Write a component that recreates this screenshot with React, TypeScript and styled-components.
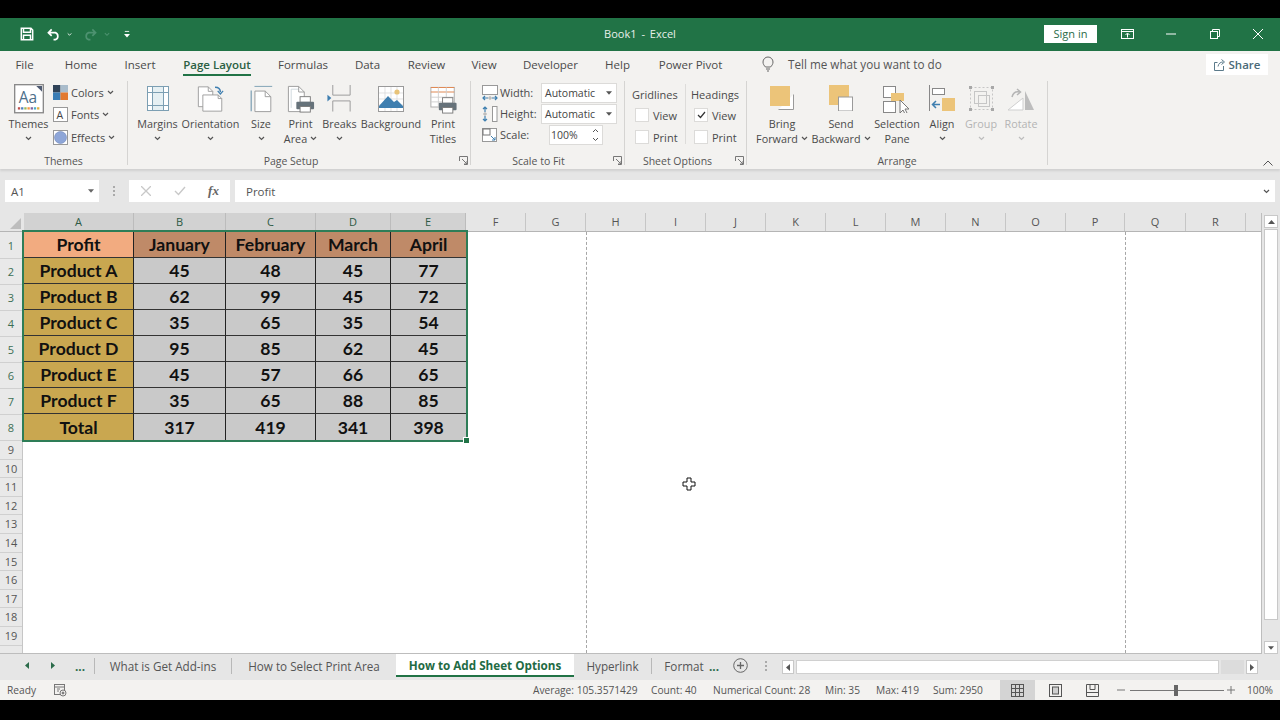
import React from 'react';
import styled, { createGlobalStyle } from 'styled-components';

const Global = createGlobalStyle`
    html, body { margin: 0; padding: 0; background: #000; }
    body { font-family: "Open Sans", "Noto Sans", sans-serif; font-size: 11px; color: #444; }
    svg { display: block; }
`;

const GREEN = '#217346';

const Screen = styled.div`
    width: 1280px;
    height: 720px;
    display: flex;
    flex-direction: column;
    overflow: hidden;
    background: #000;
    position: relative;
`;
const BlackBar = styled.div`
    height: ${p => p.$h}px;
    flex: none;
    background: #000;
`;

/* title bar */
const TitleBar = styled.div`
    height: 33px;
    flex: none;
    background: ${GREEN};
    display: grid;
    grid-template-columns: 1fr auto 1fr;
    align-items: center;
    padding-bottom: 1px;
    box-sizing: border-box;
`;
const QuickAccess = styled.div`
    display: flex;
    align-items: center;
    padding-left: 19px;
`;
const QuickSlot = styled.div<{ $w: number; $ml?: number }>`
    width: ${p => p.$w}px;
    margin-left: ${p => p.$ml ?? 0}px;
    display: flex;
    justify-content: center;
`;
const TitleText = styled.div`
    color: #e8f0eb;
    font-size: 11px;
    word-spacing: 2px;
    margin-bottom: 2px;
`;
const WindowControls = styled.div`
    display: flex;
    justify-content: flex-end;
    align-items: center;
`;
const SignIn = styled.div`
    width: 53px;
    height: 18px;
    background: #fff;
    color: #2a6b48;
    font-size: 11px;
    line-height: 18px;
    text-align: center;
    margin-right: 9px;
`;
const WinBtn = styled.div`
    width: 43.5px;
    display: flex;
    justify-content: center;
`;

/* ribbon tabs */
const TabsRow = styled.div`
    height: 29px;
    flex: none;
    background: #f3f2f0;
    display: flex;
    align-items: flex-start;
    position: relative;
`;
const RibbonTab = styled.div<{ $w: number; $active?: boolean }>`
    width: ${p => p.$w}px;
    text-align: center;
    font-size: 11.5px;
    font-weight: ${p => (p.$active ? 600 : 400)};
    line-height: 16px;
    padding-top: 6px;
    color: ${p => (p.$active ? '#2b5f43' : '#4a4a4a')};
    span {
        display: inline-block;
        padding-bottom: 1px;
        border-bottom: ${p => (p.$active ? `2px solid ${GREEN}` : 'none')};
    }
`;
const TellMe = styled.div`
    display: flex;
    align-items: center;
    gap: 14px;
    margin-left: 26px;
    padding-top: 5px;
    font-size: 11.7px;
    color: #555;
`;
const ShareBtn = styled.div`
    position: absolute;
    right: 12px;
    top: 3px;
    width: 62px;
    height: 21px;
    background: #fff;
    display: flex;
    align-items: center;
    justify-content: center;
    gap: 3px;
    font-size: 11.5px;
    font-weight: 600;
    color: #4a6a78;
`;

/* ribbon body */
const Ribbon = styled.div`
    height: 89px;
    flex: none;
    background: #f3f2f0;
    display: flex;
    position: relative;
    box-shadow: 0 2px 2px #d0d0d0;
    z-index: 1;
`;
const Group = styled.div<{ $w: number }>`
    width: ${p => p.$w}px;
    flex: none;
    height: 84px;
    margin-top: 1px;
    display: flex;
    flex-direction: column;
    position: relative;
    border-right: 1px solid #d5d4d2;
    box-sizing: border-box;
`;
const GroupBody = styled.div<{ $pl: number }>`
    height: 67px;
    flex: none;
    padding-left: ${p => p.$pl}px;
    padding-top: 3px;
    box-sizing: border-box;
    display: flex;
    align-items: flex-start;
`;
const GroupLabel = styled.div<{ $pr?: number }>`
    height: 16px;
    flex: none;
    line-height: 16px;
    text-align: center;
    font-size: 10.5px;
    color: #555;
    margin-top: 5px;
    padding-right: ${p => p.$pr ?? 0}px;
`;
const Launcher = styled.div`
    position: absolute;
    right: 2px;
    bottom: 0;
`;
const BigBtn = styled.div<{ $w: number; $dim?: boolean }>`
    width: ${p => p.$w}px;
    flex: none;
    display: flex;
    flex-direction: column;
    align-items: center;
    color: ${p => (p.$dim ? '#b4b4b4' : '#4a4a4a')};
    font-size: 10.8px;
    line-height: 15px;
    white-space: nowrap;
`;
const IconSlot = styled.div`
    height: 32px;
    padding-top: 1px;
    box-sizing: border-box;
    display: flex;
    align-items: flex-start;
    justify-content: center;
`;
const LabelLine = styled.div`
    height: 15px;
    display: flex;
    align-items: center;
    justify-content: center;
    gap: 3px;
`;
const SmallList = styled.div`
    display: flex;
    flex-direction: column;
    gap: 6.5px;
    margin-left: 6px;
`;
const SmallItem = styled.div`
    height: 16px;
    display: flex;
    align-items: center;
    gap: 3px;
    font-size: 11px;
    color: #4a4a4a;
    white-space: nowrap;
`;
const ScaleGrid = styled.div`
    display: grid;
    grid-template-columns: 18px 41px 76px;
    grid-auto-rows: 21px;
    align-items: center;
    margin-top: -2px;
    font-size: 11px;
    color: #4a4a4a;
`;
const SelectBox = styled.div`
    width: 76px;
    height: 20px;
    box-sizing: border-box;
    background: #fff;
    border: 1px solid #dcdbd9;
    display: flex;
    align-items: center;
    justify-content: space-between;
    padding: 0 4px 0 3px;
    font-size: 10.5px;
    color: #444;
`;
const SpinBox = styled(SelectBox)`
    width: 54px;
    margin-left: 8px;
    padding: 0 3px 0 1px;
`;
const SheetOptCol = styled.div<{ $w: number; $pl: number; $line?: boolean }>`
    width: ${p => p.$w}px;
    flex: none;
    box-sizing: border-box;
    padding-left: ${p => p.$pl}px;
    border-right: ${p => (p.$line ? '1px solid #dddcda' : 'none')};
    height: 60px;
    font-size: 11px;
    color: #4a4a4a;
    display: flex;
    flex-direction: column;
`;
const OptHead = styled.div`
    height: 15px;
    flex: none;
    line-height: 15px;
    margin: 3px 0 2px 0;
    white-space: nowrap;
`;
const OptRow = styled.div`
    height: 22px;
    flex: none;
    display: flex;
    align-items: center;
    gap: 4px;
    padding-left: 3px;
`;
const CheckBox = styled.div`
    width: 12px;
    height: 12px;
    background: #fff;
    border: 1px solid #dcdbd9;
    display: flex;
    align-items: center;
    justify-content: center;
`;
const Collapse = styled.div`
    position: absolute;
    right: 7px;
    bottom: 3px;
`;

/* formula bar */
const FormulaBar = styled.div`
    height: 44px;
    flex: none;
    background: #e6e6e6;
    display: flex;
    align-items: flex-start;
    padding: 11px 5px 0 5px;
    box-sizing: border-box;
    font-size: 11.5px;
    color: #555;
`;
const NameBox = styled.div`
    width: 94px;
    height: 22px;
    background: #fff;
    display: flex;
    align-items: center;
    justify-content: space-between;
    padding: 0 5px 0 6px;
    box-sizing: border-box;
`;
const BarDots = styled.div`
    width: 30px;
    display: flex;
    justify-content: center;
    padding-top: 6px;
`;
const FxBox = styled.div`
    width: 101px;
    height: 22px;
    background: #fff;
    display: grid;
    grid-template-columns: 34px 34px 33px;
    align-items: center;
    justify-items: center;
    margin-right: 5px;
`;
const FxText = styled.span`
    font-family: "Liberation Serif", serif;
    font-style: italic;
    font-size: 13px;
    font-weight: 700;
    color: #666;
`;
const FormulaInput = styled.div`
    flex: 1;
    height: 22px;
    background: #fff;
    display: flex;
    align-items: center;
    justify-content: space-between;
    padding: 0 5px 0 11px;
`;

/* sheet */
const SheetArea = styled.div`
    height: 441px;
    flex: none;
    display: flex;
    background: #fff;
    position: relative;
`;
const SheetMain = styled.div`
    width: 1262px;
    display: flex;
    flex-direction: column;
    border-right: 1px solid #bdbdbd;
    box-sizing: border-box;
    overflow: hidden;
    border-bottom: 1px solid #bdbdbd;
`;
const ColHeaderRow = styled.div`
    height: 19px;
    flex: none;
    display: flex;
    background: #e6e6e6;
    border-bottom: 1px solid #b5b5b5;
    box-sizing: border-box;
`;
const Corner = styled.div`
    width: 24px;
    flex: none;
    display: flex;
    align-items: flex-end;
    justify-content: flex-end;
    padding: 0 3px 2px 0;
    box-sizing: border-box;
`;
const ColHead = styled.div<{ $w: number; $sel?: boolean }>`
    width: ${p => p.$w}px;
    flex: none;
    box-sizing: border-box;
    text-align: center;
    font-size: 11px;
    line-height: 17px;
    color: ${p => (p.$sel ? '#2f5a44' : '#555')};
    background: ${p => (p.$sel ? '#d2d2d2' : '#e6e6e6')};
    border-right: 1px solid ${p => (p.$sel ? '#bcbcbc' : '#c6c6c6')};
`;
const SheetBody = styled.div`
    flex: 1;
    display: flex;
    position: relative;
    min-height: 0;
`;
const RowHeaders = styled.div`
    width: 23px;
    flex: none;
    background: #e9e9e9;
    border-right: 1px solid #c6c6c6;
    box-sizing: border-box;
    padding-top: 1px;
`;
const RowHead = styled.div<{ $h: number; $sel?: boolean }>`
    height: ${p => p.$h}px;
    box-sizing: border-box;
    border-bottom: 1px solid #d0d0d0;
    text-align: center;
    font-size: 11px;
    line-height: ${p => p.$h}px;
    color: ${p => (p.$sel ? '#3c6f54' : '#555')};
`;
const Canvas = styled.div`
    flex: 1;
    padding-left: 1px;
`;
const Table = styled.div`
    width: 442px;
    position: relative;
    display: grid;
    grid-template-columns: 110px 92px 90px 75px 75px;
    grid-auto-rows: 26px;
    outline: 2px solid #2e7d57;
    font-family: Lato, "Open Sans", sans-serif;
    font-weight: 700;
    font-size: 17.6px;
    color: #111;
`;
const Cell = styled.div<{ $bg: string; $last?: boolean; $bottom?: boolean }>`
    background: ${p => p.$bg};
    display: flex;
    align-items: center;
    justify-content: center;
    box-sizing: border-box;
    border-right: ${p => (p.$last ? 'none' : '1.5px solid #222')};
    border-bottom: ${p => (p.$bottom ? 'none' : '1.5px solid #333')};
`;
const FillHandle = styled.div`
    position: absolute;
    right: -4px;
    bottom: -4px;
    width: 5px;
    height: 5px;
    background: ${GREEN};
    border: 1px solid #fff;
`;
const PageBreak = styled.div<{ $x: number }>`
    position: absolute;
    left: ${p => p.$x}px;
    top: 0;
    bottom: 0;
    width: 0;
    border-left: 1px dashed #a6a6a6;
`;
const Pointer = styled.div`
    position: absolute;
    left: 682px;
    top: 245px;
`;
const VScroll = styled.div`
    width: 18px;
    flex: none;
    background: #e6e6e6;
    display: flex;
    flex-direction: column;
    align-items: center;
    padding-top: 2px;
    box-sizing: border-box;
`;
const ScrollArrow = styled.div`
    width: 14px;
    height: 13px;
    flex: none;
    background: #fff;
    border: 1px solid #c8c8c8;
    box-sizing: border-box;
    display: flex;
    align-items: center;
    justify-content: center;
`;
const VThumb = styled.div`
    width: 14px;
    height: 392px;
    margin: 1px 0 21px;
    background: #fff;
    border: 1px solid #c8c8c8;
    box-sizing: border-box;
`;

/* sheet tabs */
const SheetTabs = styled.div`
    height: 26px;
    flex: none;
    background: #e6e6e6;
    display: flex;
    align-items: flex-start;
    padding-left: 14px;
    box-sizing: border-box;
    font-size: 11.7px;
    color: #555;
`;
const TabNav = styled.div<{ $w: number }>`
    width: ${p => p.$w}px;
    height: 23px;
    flex: none;
    display: flex;
    align-items: center;
    justify-content: center;
    color: #2b6b4a;
    font-weight: 700;
`;
const SheetTab = styled.div<{ $w: number; $pl?: number; $active?: boolean; $line?: boolean; $lineLeft?: boolean }>`
    width: ${p => p.$w}px;
    height: ${p => (p.$active ? 23 : 16)}px;
    margin-top: ${p => (p.$active ? 0 : 4)}px;
    padding-left: ${p => p.$pl ?? 0}px;
    flex: none;
    box-sizing: border-box;
    display: flex;
    align-items: center;
    justify-content: center;
    white-space: nowrap;
    background: ${p => (p.$active ? '#fff' : 'transparent')};
    color: ${p => (p.$active ? '#1f6b44' : '#555')};
    font-weight: ${p => (p.$active ? 700 : 400)};
    border-bottom: ${p => (p.$active ? `2px solid ${GREEN}` : 'none')};
    border-right: ${p => (p.$line ? '1px solid #b8b8b8' : 'none')};
    border-left: ${p => (p.$lineLeft ? '1px solid #b8b8b8' : 'none')};
`;
const HScroll = styled.div`
    width: 476px;
    height: 14px;
    margin-top: 6px;
    margin-left: 11px;
    flex: none;
    display: flex;
    align-items: stretch;
    gap: 2px;
`;
const HArrow = styled.div`
    width: 12px;
    background: #fff;
    border: 1px solid #c8c8c8;
    box-sizing: border-box;
    display: flex;
    align-items: center;
    justify-content: center;
`;
const HThumb = styled.div`
    width: 423px;
    background: #fff;
    border: 1px solid #d0d0d0;
    box-sizing: border-box;
`;
const HTrack = styled.div`
    flex: 1;
    background: #dcdcdc;
`;

/* status bar */
const StatusBar = styled.div`
    height: 20px;
    flex: none;
    background: #f3f2f0;
    display: flex;
    align-items: center;
    font-size: 10.2px;
    color: #555;
    padding-left: 7px;
`;
const StatusReady = styled.div`
    width: 47px;
`;
const StatusRight = styled.div`
    margin-left: auto;
    display: flex;
    align-items: center;
    height: 100%;
`;
const StatusStat = styled.div<{ $w: number }>`
    width: ${p => p.$w}px;
    white-space: nowrap;
`;
const ViewBtn = styled.div<{ $w: number; $on?: boolean }>`
    width: ${p => p.$w}px;
    height: 100%;
    display: flex;
    align-items: center;
    justify-content: center;
    background: ${p => (p.$on ? '#d4d4d4' : 'transparent')};
`;
const ZoomMinus = styled.div`
    margin-left: 8px;
`;
const ZoomSlider = styled.div`
    width: 94px;
    height: 1px;
    background: #777;
    margin: 0 3px 0 5px;
    position: relative;
`;
const ZoomThumb = styled.div`
    position: absolute;
    left: 44px;
    top: -5px;
    width: 4px;
    height: 11px;
    background: #666;
`;
const ZoomPct = styled.div`
    width: 33px;
    margin-left: 12px;
`;

/* icons */
const Chevron = ({ c = '#555' }: { c?: string }) => (
    <svg width="7" height="5" viewBox="0 0 7 5"><path d="M1 1l2.5 2.5L6 1" fill="none" stroke={c} strokeWidth="1.2" /></svg>
);
const Caret = ({ c = '#666' }: { c?: string }) => (
    <svg width="6" height="4" viewBox="0 0 7 4"><path d="M0 0h7L3.5 4z" fill={c} /></svg>
);
const Dialog = () => (
    <svg width="9" height="9" viewBox="0 0 9 9"><path d="M.5 5V.5H8.5V8.5H5M3 3l5 5M8 5v3H5" fill="none" stroke="#777" /></svg>
);
const SaveIcon = () => (
    <svg width="14" height="14" viewBox="0 0 16 16" fill="none" stroke="#fff" strokeWidth="1.7"><path d="M1.5 1.5h11l2 2v11h-13zM4 2v4h8V2M4 14.5V9.500h8v5" /></svg>
);
const UndoIcon = ({ c }: { c: string }) => (
    <svg width="14" height="13" viewBox="0 0 15 13" fill="none" stroke={c} strokeWidth="1.8"><path d="M5 1L1.500 4.500 5 8M2 4.500h7a4 4 0 0 1 0 7.500H7" /></svg>
);
const RedoIcon = ({ c }: { c: string }) => (
    <svg width="14" height="13" viewBox="0 0 15 13" fill="none" stroke={c} strokeWidth="1.8"><path d="M10 1l3.500 3.500L10 8M13 4.500H6a4 4 0 0 0 0 7.500h2" /></svg>
);
const CustomizeIcon = () => (
    <svg width="6" height="8" viewBox="0 0 7 8"><path d="M1 1h5" stroke="#fff" /><path d="M0 4h7L3.500 8z" fill="#fff" /></svg>
);
const ThemesIcon = () => (
    <svg width="30" height="30" viewBox="0 0 31 31" style={{ marginTop: -1 }}>
        <rect x=".7" y=".7" width="29.600" height="29" fill="#fff" stroke="#8a8a8a" strokeWidth="1.400" />
        <path d="M23 2h6v6z" fill="#4f5b72" />
        <text x="5" y="20" fontSize="16" fontFamily="Open Sans" fill="#4d6f8a">Aa</text>
        {['#c0504d', '#4f81bd', '#9bbb59', '#f79646', '#8064a2', '#4bacc6', '#e0b040'].map((c, i) => (
            <rect key={c} x={4 + i * 3.3} y="24" width="2.400" height="2.400" fill={c} />
        ))}
    </svg>
);
const ColorsIcon = () => (
    <svg width="15" height="15" viewBox="0 0 15 15">
        <rect width="7.500" height="7.500" fill="#2f4358" /><rect x="7.500" width="7.500" height="7.500" fill="#a9bccb" />
        <rect y="7.500" width="7.500" height="7.500" fill="#3a7db5" /><rect x="7.500" y="7.500" width="7.500" height="7.500" fill="#e2792f" />
    </svg>
);
const FontsIcon = () => (
    <svg width="15" height="15" viewBox="0 0 15 15">
        <rect x=".5" y=".5" width="14" height="14" fill="#fff" stroke="#999" />
        <text x="3.500" y="12" fontSize="10.500" fontFamily="Open Sans" fill="#444">A</text>
    </svg>
);
const EffectsIcon = () => (
    <svg width="15" height="15" viewBox="0 0 15 15">
        <rect x=".5" y=".5" width="14" height="14" fill="#fff" stroke="#999" />
        <circle cx="7.500" cy="7.500" r="6" fill="#8ea6d8" stroke="#6f86b8" strokeWidth=".6" />
    </svg>
);
const MarginsIcon = () => (
    <svg width="24" height="27" viewBox="0 0 24 27" fill="none" stroke="#7c9fb3">
        <rect x="1.500" y="1.500" width="21" height="24" fill="#fff" />
        <rect x="6.500" y="1.500" width="11" height="24" fill="#e6f0f3" />
        <path d="M1.500 7.500h21M1.500 20.500h21" />
    </svg>
);
const OrientationIcon = () => (
    <svg width="27" height="28" viewBox="0 0 30 30" fill="none" stroke="#9a9a9a">
        <path d="M1.500 1.500h11l5 5v17h-16z" fill="#fff" />
        <path d="M12.500 1.500v5h5" />
        <path d="M6.500 10.500h17l4 4v14h-21z" fill="#fff" />
        <path d="M23.500 10.500v4h4" />
        <path d="M20 2c4 0 6 1.500 6 5.500" stroke="#3f7fb0" strokeWidth="1.600" />
        <path d="M23 6l3 3.500 3-3.500" stroke="#3f7fb0" strokeWidth="1.400" />
    </svg>
);
const SizeIcon = () => (
    <svg width="24" height="28" viewBox="0 0 24 30" fill="none">
        <path d="M5 1.500h19" stroke="#7c9fb3" /><path d="M1.500 6v22" stroke="#7c9fb3" strokeWidth="1.300" />
        <path d="M5.500 6.500h11l6 6v16h-17z" fill="#fff" stroke="#9a9a9a" /><path d="M16.500 6.500v6h6" stroke="#9a9a9a" />
    </svg>
);
const Printer = ({ x, y }: { x: number; y: number }) => (
    <g transform={`translate(${x} ${y})`}>
        <rect x="4" y="0.500" width="11" height="6" fill="#fff" stroke="#7a7a7a" />
        <rect x="0" y="6" width="19" height="8" rx="1" fill="#66727a" />
        <rect x="4" y="11" width="11" height="6" fill="#fff" stroke="#7a7a7a" />
    </g>
);
const PrintAreaIcon = () => (
    <svg width="30" height="28" viewBox="0 0 30 30" fill="none">
        <path d="M1.500 1.500h11l6 6v21h-17z" fill="#fff" stroke="#9a9a9a" />
        <path d="M4.500 4.500h8M4.500 4.500v20" stroke="#cfd8dd" />
        <path d="M12.500 1.500v6h6" stroke="#9a9a9a" />
        <Printer x={10} y={12} />
    </svg>
);
const BreaksIcon = () => (
    <svg width="26" height="27" viewBox="0 0 26 28" fill="none" stroke="#9a9a9a">
        <path d="M5.500 0v10.500h18V0M5.500 27.500V16.500h18v11" />
        <path d="M0 10v7l4-3.500z" fill="#3f7fb0" stroke="none" />
    </svg>
);
const BackgroundIcon = () => (
    <svg width="26" height="26" viewBox="0 0 26 26" style={{ marginTop: 1 }}>
        <rect x=".5" y=".5" width="25" height="25" fill="#fff" stroke="#9a9a9a" />
        <path d="M1 7h24M1 13h24M1 19h24M7 1v24M13 1v24M19 1v24" stroke="#d6d6d6" strokeWidth=".7" />
        <circle cx="19" cy="6" r="2.600" fill="#e8c378" />
        <path d="M1 20l9-10 6 6 3-2 6 6v2H1z" fill="#3f7fb0" />
    </svg>
);
const PrintTitlesIcon = () => (
    <svg width="29" height="28" viewBox="0 0 30 30" fill="none" style={{ marginTop: 1 }}>
        <rect x="1.500" y="1.500" width="25" height="21" fill="#fff" stroke="#a9a9a9" />
        <path d="M1.500 1.500h25M1.500 6.500h25" stroke="#e08a55" strokeWidth="1.100" />
        <path d="M9.500 1.500v21M18 1.500v21M1.500 12h25M1.500 17h25" stroke="#cfcfcf" />
        <Printer x={10} y={12} />
    </svg>
);
const WidthIcon = () => (
    <svg width="16" height="16" viewBox="0 0 16 16" fill="none">
        <rect x=".5" y=".5" width="15" height="9" fill="#fff" stroke="#999" />
        <path d="M1 13h5M10 13h5M3 11l-2 2 2 2M13 11l2 2-2 2" stroke="#3f7fb0" strokeWidth="1.200" />
        <circle cx="8" cy="13" r="1.200" fill="none" stroke="#888" strokeWidth=".7" />
    </svg>
);
const HeightIcon = () => (
    <svg width="16" height="16" viewBox="0 0 16 16" fill="none">
        <rect x="10.500" y=".5" width="4.500" height="15" fill="#fff" stroke="#999" />
        <path d="M3 1v5M3 10v5M1 3l2-2 2 2M1 13l2 2 2-2" stroke="#3f7fb0" strokeWidth="1.200" />
        <circle cx="3" cy="8" r="1.200" fill="none" stroke="#888" strokeWidth=".7" />
    </svg>
);
const ScaleIcon = () => (
    <svg width="15" height="14" viewBox="0 0 15 14" fill="none">
        <rect x=".5" y=".5" width="14" height="13" fill="#fff" stroke="#999" />
        <rect x="1" y="1" width="7" height="6" fill="#fff" stroke="#777" />
        <path d="M9 8l4 4M13 9v3h-3" stroke="#3f7fb0" />
    </svg>
);
const SpinArrows = () => (
    <svg width="7" height="16" viewBox="0 0 7 16" fill="none" stroke="#555"><path d="M1 5l2.500-2.500L6 5M1 11l2.500 2.500L6 11" /></svg>
);
const Tick = () => (
    <svg width="9" height="8" viewBox="0 0 9 8" fill="none" stroke="#333" strokeWidth="1.200"><path d="M1 4l2.500 2.500L8 1" /></svg>
);
const BringIcon = () => (
    <svg width="26" height="26" viewBox="0 0 26 26" fill="none">
        <path d="M9.500 24.500h15v-15" stroke="#9a9a9a" fill="#fff" />
        <rect x="1" y="1" width="20" height="20" fill="#ecc479" />
    </svg>
);
const SendIcon = () => (
    <svg width="26" height="26" viewBox="0 0 26 26">
        <rect x="1" y="0" width="20" height="20" fill="#ecc479" />
        <rect x="10.500" y="12" width="14" height="14" fill="#fff" stroke="#9a9a9a" />
    </svg>
);
const SelectionIcon = () => (
    <svg width="28" height="28" viewBox="0 0 28 28" fill="none">
        <rect x=".5" y="1.500" width="12" height="11" fill="#fff" stroke="#888" />
        <rect x="8" y="8" width="13" height="8" fill="#ecc479" />
        <rect x=".5" y="16.500" width="12" height="11" fill="#fff" stroke="#888" />
        <path d="M17 15v13l3-3 2 4 2-1-2-4h4z" fill="#fff" stroke="#777" />
    </svg>
);
const AlignIcon = () => (
    <svg width="26" height="26" viewBox="0 0 26 26" fill="none">
        <path d="M.5 0v26" stroke="#888" />
        <rect x="3.500" y="3.500" width="12" height="6" fill="#fff" stroke="#888" />
        <rect x="13" y="13" width="13" height="13" fill="#ecc479" />
        <path d="M11 19.500H4M7 16l-3.500 3.500L7 23" stroke="#3f7fb0" strokeWidth="1.500" />
    </svg>
);
const GroupIcon = () => (
    <svg width="27" height="27" viewBox="0 0 27 27" fill="none" stroke="#c6c6c6">
        <rect x="2.500" y="2.500" width="22" height="22" strokeDasharray="2 2" />
        <rect x="6.500" y="6.500" width="12" height="12" /><rect x="10.500" y="10.500" width="11" height="11" />
        <path d="M1 1h3v3H1zM23 1h3v3h-3zM1 23h3v3H1zM23 23h3v3h-3z" fill="#a8a8a8" stroke="none" />
    </svg>
);
const RotateIcon = () => (
    <svg width="28" height="27" viewBox="0 -3 28 27">
        <path d="M18 3l9 19h-9z" fill="#bdbdbd" />
        <path d="M1 22l15-12v12z" fill="#fff" stroke="#cfcfcf" />
        <path d="M5 9c1-4 4-6 8-5M10 1l3.500 3L10 7" fill="none" stroke="#b5b5b5" strokeWidth="1.500" />
    </svg>
);
const BulbIcon = () => (
    <svg width="12" height="16" viewBox="0 0 12 16" fill="none" stroke="#666"><path d="M3.500 11C2 9.500 1 8 1 6a5 5 0 0 1 10 0c0 2-1 3.500-2.500 5zM4 13h4M5 15h2" /></svg>
);
const ShareIcon = () => (
    <svg width="12" height="12" viewBox="0 0 12 12" fill="none" stroke="#5b7a8a"><path d="M3.500 3.500H.5v8h9V7M4 7.500C4.500 4.500 6.500 3 9 3M7.500 .5L10.500 3 7.500 5.500" /></svg>
);
const RibbonDisplayIcon = () => (
    <svg width="13" height="10" viewBox="0 0 13 10" fill="none" stroke="#fff"><rect x=".5" y=".5" width="12" height="9" /><path d="M1 2.500h11" /><path d="M6.500 8.500v-4M4.500 6l2-2 2 2" /></svg>
);
const MinIcon = () => (
    <svg width="10" height="2" viewBox="0 0 10 2"><path d="M0 1h10" stroke="#fff" /></svg>
);
const RestoreIcon = () => (
    <svg width="10" height="10" viewBox="0 0 10 10" fill="none" stroke="#fff"><rect x=".5" y="2.500" width="7" height="7" /><path d="M2.500 2.500v-2h7v7h-2" /></svg>
);
const CloseIcon = () => (
    <svg width="10" height="10" viewBox="0 0 10 10" stroke="#fff"><path d="M0 0l10 10M10 0L0 10" /></svg>
);
const CrossIcon = () => (
    <svg width="10" height="10" viewBox="0 0 10 10" stroke="#c8c8c8" strokeWidth="1.300"><path d="M0 0l10 10M10 0L0 10" /></svg>
);
const CheckIcon = () => (
    <svg width="12" height="10" viewBox="0 0 12 10" fill="none" stroke="#c8c8c8" strokeWidth="1.400"><path d="M1 5l3.500 3.500L11 1" /></svg>
);
const BarGrip = () => (
    <svg width="2" height="10" viewBox="0 0 2 10" fill="#aaa"><rect y="0" width="2" height="2" /><rect y="4" width="2" height="2" /><rect y="8" width="2" height="2" /></svg>
);
const CornerTriangle = () => (
    <svg width="11" height="11" viewBox="0 0 11 11"><path d="M11 0v11H0z" fill="#bdbdbd" /></svg>
);
const CrossCursor = () => (
    <svg width="14" height="14" viewBox="0 0 14 14"><path d="M5 1h4v4h4v4H9v4H5V9H1V5h4z" fill="#fff" stroke="#111" /></svg>
);
const TriLeft = ({ c = '#555' }: { c?: string }) => (
    <svg width="4" height="7" viewBox="0 0 4 7"><path d="M4 0v7L0 3.500z" fill={c} /></svg>
);
const TriRight = ({ c = '#555' }: { c?: string }) => (
    <svg width="4" height="7" viewBox="0 0 4 7"><path d="M0 0v7l4-3.500z" fill={c} /></svg>
);
const TriUp = () => (
    <svg width="7" height="4" viewBox="0 0 7 4"><path d="M0 4h7L3.500 0z" fill="#555" /></svg>
);
const PlusCircle = () => (
    <svg width="15" height="15" viewBox="0 0 15 15" fill="none" stroke="#666"><circle cx="7.500" cy="7.500" r="6.800" /><path d="M7.500 4v7M4 7.500h7" strokeWidth="1.300" /></svg>
);
const MacroIcon = () => (
    <svg width="13" height="13" viewBox="0 0 13 13" fill="none" stroke="#777"><rect x=".5" y=".5" width="10" height="10" /><path d="M1 3h9M3 5h3M3 7h2" /><circle cx="9" cy="9" r="3" fill="#f3f2f0" /><circle cx="9" cy="9" r="1" fill="#777" /></svg>
);
const NormalViewIcon = () => (
    <svg width="13" height="13" viewBox="0 0 13 13" fill="none" stroke="#555"><rect x=".5" y=".5" width="12" height="12" /><path d="M.5 4.500h12M.5 8.500h12M4.500 .5v12M8.500 .5v12" /></svg>
);
const PageViewIcon = () => (
    <svg width="13" height="13" viewBox="0 0 13 13" fill="none" stroke="#555"><rect x=".5" y=".5" width="12" height="12" /><rect x="3.500" y="3" width="6" height="7" fill="#cfcfcf" /></svg>
);
const BreakViewIcon = () => (
    <svg width="13" height="13" viewBox="0 0 13 13" fill="none" stroke="#555"><path d="M.5 8.500h12M.5 .5h12v12H.5zM4 .5v5h5v-5" /></svg>
);

/* data */
const ribbonTabs: [string, number][] = [
    ['File', 49], ['Home', 64], ['Insert', 54], ['Page Layout', 100], ['Formulas', 72], ['Data', 57],
    ['Review', 61], ['View', 54], ['Developer', 79], ['Help', 55], ['Power Pivot', 91],
];
const columns: [string, number][] = [
    ['A', 110], ['B', 92], ['C', 90], ['D', 75], ['E', 75], ['F', 60], ['G', 60], ['H', 60], ['I', 60], ['J', 60],
    ['K', 60], ['L', 60], ['M', 60], ['N', 60], ['O', 60], ['P', 59], ['Q', 61], ['R', 60],
];
const tableRows = [
    ['Profit', 'January', 'February', 'March', 'April'],
    ['Product A', '45', '48', '45', '77'],
    ['Product B', '62', '99', '45', '72'],
    ['Product C', '35', '65', '35', '54'],
    ['Product D', '95', '85', '62', '45'],
    ['Product E', '45', '57', '66', '65'],
    ['Product F', '35', '65', '88', '85'],
    ['Total', '317', '419', '341', '398'],
];
const cellColor = (r: number, c: number) => {
    if (r === 0) return c === 0 ? '#f2ab80' : '#bf8a68';
    return c === 0 ? '#c9a750' : '#c9c9c9';
};
const lowerRows = Array.from({ length: 12 }, (_, i) => i + 9);

interface BigProps {
    w: number;
    icon: React.ReactNode;
    l1: string;
    l2?: string;
    dim?: boolean;
    caret?: boolean;
}
function Big({ w, icon, l1, l2, dim, caret = true }: BigProps) {
    const col = dim ? '#bdbdbd' : '#555';
    return (
        <BigBtn $w={w} $dim={dim}>
            <IconSlot>{icon}</IconSlot>
            <LabelLine>{l1}</LabelLine>
            <LabelLine>
                {l2}
                {caret && <Chevron c={col} />}
            </LabelLine>
        </BigBtn>
    );
}

export default function App() {
    return (
        <Screen>
            <Global />
            <BlackBar $h={18} />
            <TitleBar>
                <QuickAccess>
                    <QuickSlot $w={16}><SaveIcon /></QuickSlot>
                    <QuickSlot $w={26} $ml={6}><UndoIcon c="#fff" /></QuickSlot>
                    <QuickSlot $w={5}><Chevron c="#fff" /></QuickSlot>
                    <QuickSlot $w={28} $ml={4}><RedoIcon c="#4d9270" /></QuickSlot>
                    <QuickSlot $w={6}><Chevron c="#4d9270" /></QuickSlot>
                    <QuickSlot $w={34}><CustomizeIcon /></QuickSlot>
                </QuickAccess>
                <TitleText>Book1 - Excel</TitleText>
                <WindowControls>
                    <SignIn>Sign in</SignIn>
                    <WinBtn><RibbonDisplayIcon /></WinBtn>
                    <WinBtn><MinIcon /></WinBtn>
                    <WinBtn><RestoreIcon /></WinBtn>
                    <WinBtn><CloseIcon /></WinBtn>
                </WindowControls>
            </TitleBar>

            <TabsRow>
                {ribbonTabs.map(([name, w]) => (
                    <RibbonTab key={name} $w={w} $active={name === 'Page Layout'}><span>{name}</span></RibbonTab>
                ))}
                <TellMe><BulbIcon />Tell me what you want to do</TellMe>
                <ShareBtn><ShareIcon />Share</ShareBtn>
            </TabsRow>

            <Ribbon>
                <Group $w={128}>
                    <GroupBody $pl={10}>
                        <Big w={37} icon={<ThemesIcon />} l1="Themes" />
                        <SmallList>
                            <SmallItem><ColorsIcon />Colors <Chevron /></SmallItem>
                            <SmallItem><FontsIcon />Fonts <Chevron /></SmallItem>
                            <SmallItem><EffectsIcon />Effects <Chevron /></SmallItem>
                        </SmallList>
                    </GroupBody>
                    <GroupLabel>Themes</GroupLabel>
                </Group>
                <Group $w={343}>
                    <GroupBody $pl={7}>
                        <Big w={45} icon={<MarginsIcon />} l1="Margins" />
                        <Big w={61} icon={<OrientationIcon />} l1="Orientation" />
                        <Big w={40} icon={<SizeIcon />} l1="Size" />
                        <Big w={39} icon={<PrintAreaIcon />} l1="Print" l2="Area" />
                        <Big w={39} icon={<BreaksIcon />} l1="Breaks" />
                        <Big w={64} icon={<BackgroundIcon />} l1="Background" caret={false} />
                        <Big w={40} icon={<PrintTitlesIcon />} l1="Print" l2="Titles" caret={false} />
                    </GroupBody>
                    <GroupLabel $pr={16}>Page Setup</GroupLabel>
                    <Launcher><Dialog /></Launcher>
                </Group>
                <Group $w={154}>
                    <GroupBody $pl={11}>
                        <ScaleGrid>
                            <WidthIcon /><span>Width:</span>
                            <SelectBox>Automatic <Caret c="#555" /></SelectBox>
                            <HeightIcon /><span>Height:</span>
                            <SelectBox>Automatic <Caret c="#555" /></SelectBox>
                            <ScaleIcon /><span>Scale:</span>
                            <SpinBox>100% <SpinArrows /></SpinBox>
                        </ScaleGrid>
                    </GroupBody>
                    <GroupLabel $pr={18}>Scale to Fit</GroupLabel>
                    <Launcher><Dialog /></Launcher>
                </Group>
                <Group $w={122}>
                    <GroupBody $pl={7}>
                        <SheetOptCol $w={54} $pl={0} $line>
                            <OptHead>Gridlines</OptHead>
                            <OptRow><CheckBox />View</OptRow>
                            <OptRow><CheckBox />Print</OptRow>
                        </SheetOptCol>
                        <SheetOptCol $w={60} $pl={5}>
                            <OptHead>Headings</OptHead>
                            <OptRow><CheckBox><Tick /></CheckBox>View</OptRow>
                            <OptRow><CheckBox />Print</OptRow>
                        </SheetOptCol>
                    </GroupBody>
                    <GroupLabel $pr={16}>Sheet Options</GroupLabel>
                    <Launcher><Dialog /></Launcher>
                </Group>
                <Group $w={301}>
                    <GroupBody $pl={5}>
                        <Big w={60} icon={<BringIcon />} l1="Bring" l2="Forward" />
                        <Big w={58} icon={<SendIcon />} l1="Send" l2="Backward" />
                        <Big w={54} icon={<SelectionIcon />} l1="Selection" l2="Pane" caret={false} />
                        <Big w={36} icon={<AlignIcon />} l1="Align" />
                        <Big w={42} icon={<GroupIcon />} l1="Group" dim />
                        <Big w={38} icon={<RotateIcon />} l1="Rotate" dim />
                    </GroupBody>
                    <GroupLabel>Arrange</GroupLabel>
                </Group>
                <Collapse>
                    <svg width="10" height="6" viewBox="0 0 10 6" fill="none" stroke="#555"><path d="M.5 5.500L5 1l4.500 4.500" /></svg>
                </Collapse>
            </Ribbon>

            <FormulaBar>
                <NameBox>A1 <Caret /></NameBox>
                <BarDots><BarGrip /></BarDots>
                <FxBox><CrossIcon /><CheckIcon /><FxText>fx</FxText></FxBox>
                <FormulaInput>Profit <Chevron /></FormulaInput>
            </FormulaBar>

            <SheetArea>
                <SheetMain>
                    <ColHeaderRow>
                        <Corner><CornerTriangle /></Corner>
                        {columns.map(([name, w], i) => (
                            <ColHead key={name} $w={w} $sel={i < 5}>{name}</ColHead>
                        ))}
                    </ColHeaderRow>
                    <SheetBody>
                        <RowHeaders>
                            {tableRows.map((_, i) => (
                                <RowHead key={i} $h={26} $sel>{i + 1}</RowHead>
                            ))}
                            {lowerRows.map(n => (
                                <RowHead key={n} $h={18.6}>{n === 20 ? '' : n}</RowHead>
                            ))}
                        </RowHeaders>
                        <Canvas>
                            <Table>
                                {tableRows.map((row, r) =>
                                    row.map((text, c) => (
                                        <Cell key={`${r}-${c}`} $bg={cellColor(r, c)} $last={c === 4} $bottom={r === 7}>{text}</Cell>
                                    ))
                                )}
                                <FillHandle />
                            </Table>
                        </Canvas>
                        <PageBreak $x={586} />
                        <PageBreak $x={1125} />
                        <Pointer><CrossCursor /></Pointer>
                    </SheetBody>
                </SheetMain>
                <VScroll>
                    <ScrollArrow><TriUp /></ScrollArrow>
                    <VThumb />
                    <ScrollArrow><Caret c="#555" /></ScrollArrow>
                </VScroll>
            </SheetArea>

            <SheetTabs>
                <TabNav $w={26}><TriLeft c="#2b6b4a" /></TabNav>
                <TabNav $w={26}><TriRight c="#2b6b4a" /></TabNav>
                <TabNav $w={28}>...</TabNav>
                <SheetTab $w={138} $line $lineLeft>What is Get Add-ins</SheetTab>
                <SheetTab $w={164}>How to Select Print Area</SheetTab>
                <SheetTab $w={178} $active>How to Add Sheet Options</SheetTab>
                <SheetTab $w={78} $line>Hyperlink</SheetTab>
                <SheetTab $w={57} $pl={7}>Format</SheetTab>
                <TabNav $w={10}>...</TabNav>
                <TabNav $w={42}><PlusCircle /></TabNav>
                <TabNav $w={10}><BarGrip /></TabNav>
                <HScroll>
                    <HArrow><TriLeft /></HArrow>
                    <HThumb />
                    <HTrack />
                    <HArrow><TriRight /></HArrow>
                </HScroll>
            </SheetTabs>

            <StatusBar>
                <StatusReady>Ready</StatusReady>
                <MacroIcon />
                <StatusRight>
                    <StatusStat $w={118}>Average: 105.3571429</StatusStat>
                    <StatusStat $w={62}>Count: 40</StatusStat>
                    <StatusStat $w={112}>Numerical Count: 28</StatusStat>
                    <StatusStat $w={51}>Min: 35</StatusStat>
                    <StatusStat $w={57}>Max: 419</StatusStat>
                    <StatusStat $w={67}>Sum: 2950</StatusStat>
                    <ViewBtn $w={35} $on><NormalViewIcon /></ViewBtn>
                    <ViewBtn $w={40}><PageViewIcon /></ViewBtn>
                    <ViewBtn $w={34}><BreakViewIcon /></ViewBtn>
                    <ZoomMinus><svg width="8" height="2" viewBox="0 0 8 2"><path d="M0 1h8" stroke="#777" /></svg></ZoomMinus>
                    <ZoomSlider><ZoomThumb /></ZoomSlider>
                    <svg width="8" height="8" viewBox="0 0 8 8"><path d="M0 4h8M4 0v8" stroke="#777" /></svg>
                    <ZoomPct>100%</ZoomPct>
                </StatusRight>
            </StatusBar>
            <BlackBar $h={20} />
        </Screen>
    );
}
